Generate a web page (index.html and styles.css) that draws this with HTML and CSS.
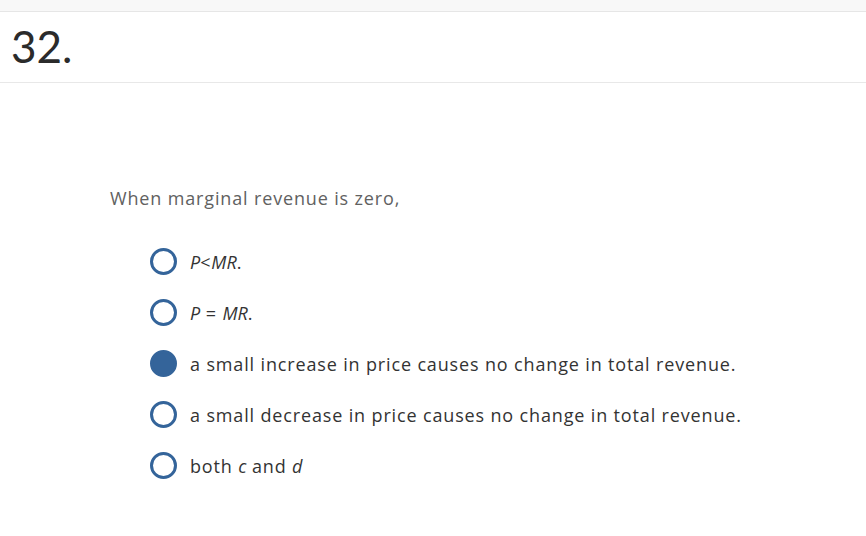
FILE: index.html
```html
<!DOCTYPE html>
<html>
<head>
<meta charset="utf-8">
<link rel="stylesheet" href="styles.css">
</head>
<body>
<div class="topbar"></div>
<header class="qhead"><h1 class="qnum">32.</h1></header>
<main class="qbody">
  <p class="prompt">When marginal revenue is zero,</p>
  <ul class="options">
    <li class="option"><span class="radio"></span><span class="label"><i>P</i>&lt;<i>MR</i>.</span></li>
    <li class="option"><span class="radio"></span><span class="label"><i>P</i> = <i>MR</i>.</span></li>
    <li class="option"><span class="radio checked"></span><span class="label">a small increase in price causes no change in total revenue.</span></li>
    <li class="option"><span class="radio"></span><span class="label">a small decrease in price causes no change in total revenue.</span></li>
    <li class="option"><span class="radio"></span><span class="label">both <i>c</i> and <i>d</i></span></li>
  </ul>
</main>
</body>
</html>
```

FILE: styles.css
```css
html, body {
  margin: 0;
  padding: 0;
  background: #fff;
  font-family: "Open Sans", "Lato", sans-serif;
}
.topbar {
  height: 11px;
  background: #f8f8f8;
  border-bottom: 1px solid #e6e6e6;
}
.qhead {
  height: 70px;
  border-bottom: 1px solid #e8e8e8;
  display: flex;
  align-items: center;
  padding-left: 11px;
}
.qnum {
  margin: 0;
  font-family: "Lato", sans-serif;
  font-weight: 400;
  font-size: 44px;
  color: #2b2b2b;
  line-height: 1;
  margin-top: -2px;
}
.qbody {
  padding: 104px 0 0 110px;
}
.prompt {
  margin: 0;
  font-size: 18px;
  letter-spacing: 0.85px;
  color: #616161;
  line-height: 22px;
}
.options {
  list-style: none;
  margin: 39px 0 0 40px;
  padding: 0;
  display: flex;
  flex-direction: column;
  gap: 24px;
}
.option {
  display: flex;
  align-items: center;
  gap: 13px;
  height: 27px;
}
.radio {
  width: 27px;
  height: 27px;
  box-sizing: border-box;
  border: 3.5px solid #34649a;
  border-radius: 50%;
  flex: none;
}
.radio.checked {
  background: #34649a;
}
.label {
  font-size: 18px;
  letter-spacing: 0.85px;
  color: #333;
}
.label i {
  font-style: italic;
  letter-spacing: 0;
}
```
